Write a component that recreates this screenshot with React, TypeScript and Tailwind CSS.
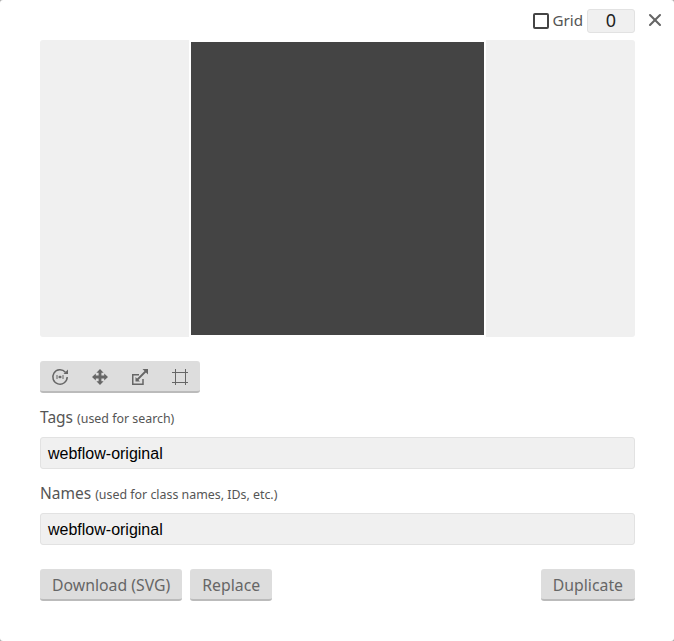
import { X } from 'lucide-react';

function ToolIcon({ children }: { children: React.ReactNode }) {
  return (
    <button className="w-10 h-full pt-[2px] flex items-center justify-center text-[#666]">
      <svg width="20" height="20" viewBox="0 0 20 20" fill="none" stroke="currentColor" strokeWidth="1.5">
        {children}
      </svg>
    </button>
  );
}

function Field({ label, hint, value }: { label: string; hint: string; value: string }) {
  return (
    <div>
      <div className="h-[22px] flex items-baseline gap-1 text-[#555]">
        <span className="text-[15.5px] leading-[22px]">{label}</span>
        <span className="text-[12.4px] leading-[22px]">{hint}</span>
      </div>
      <div className="mt-[9px] h-8 pt-px bg-[#f0f0f0] border border-[#e2e2e2] rounded-[3px] px-[7px] flex items-center text-base text-black font-['Liberation_Sans',sans-serif]">
        {value}
      </div>
    </div>
  );
}

function GrayButton({ children }: { children: React.ReactNode }) {
  return (
    <button className="h-8 px-3 pt-[3px] bg-[#dddddd] border-b-2 border-[#bbbbbb] rounded-[3px] text-[15.8px] text-[#666]">
      {children}
    </button>
  );
}

export default function App() {
  return (
    <div className="w-[674px] h-[641px] bg-[#aaaaaa] overflow-hidden">
      <div className="w-full h-full bg-white rounded-[3px] px-[40px] font-['Noto_Sans',sans-serif]">
        <div className="w-[595px] h-10 relative">
          <div className="flex items-center justify-end h-[41px]">
            <span className="w-4 h-4 border-2 border-[#444] rounded-[2px]" />
            <span className="ml-[3px] text-[15.2px] text-[#555]">Grid</span>
            <div className="ml-1 w-12 h-6 bg-[#f0f0f0] border border-[#e2e2e2] rounded-[3px] text-center text-[18px] leading-[20px] text-[#222]">0</div>
          </div>
          <X className="absolute left-[605px] top-[10px] w-5 h-5 text-[#666]" strokeWidth={2.5} />
        </div>
        <div className="w-[595px] h-[297px] bg-[#f0f0f0] rounded-[3px] flex items-center justify-center">
          <div className="w-[297px] h-[297px] border-2 border-white bg-[#444444]" />
        </div>
        <div className="mt-6 w-40 h-8 bg-[#dddddd] border-b-2 border-[#bbbbbb] rounded-[3px] flex">
          <ToolIcon>
            <path d="M15.4 5.2A7.2 7.2 0 1 0 17.2 10" />
            <path d="M18 2.5V7h-4.5z" fill="currentColor" stroke="none" />
            <path d="M7 8v4M13 8v4" strokeWidth="1" />
            <path d="M8 10l2-1.6v3.2zM12 10l-2-1.6v3.2z" fill="currentColor" stroke="none" />
          </ToolIcon>
          <ToolIcon>
            <path d="M10 2l3.6 3.8H6.4zM10 18l3.6-3.8H6.4zM2 10l3.8-3.6v7.2zM18 10l-3.8-3.6v7.2z" fill="currentColor" stroke="none" />
            <path d="M10 5v10M5 10h10" strokeWidth="2.8" />
          </ToolIcon>
          <ToolIcon>
            <path d="M9 7.75H2.75V17.25H13V12" />
            <path d="M7 13L16 4" strokeWidth="1.8" />
            <path d="M18 2v5.5L12.5 2zM5.5 14.5V10l4.5 4.5z" fill="currentColor" stroke="none" />
          </ToolIcon>
          <ToolIcon>
            <path d="M5.5 2v16M15.5 2v16M2 5.5h16M2 15.5h16" strokeWidth="1" />
          </ToolIcon>
        </div>
        <div className="mt-[13px] w-[595px] flex flex-col gap-[13px]">
          <Field label="Tags" hint="(used for search)" value="webflow-original" />
          <Field label="Names" hint="(used for class names, IDs, etc.)" value="webflow-original" />
        </div>
        <div className="mt-6 w-[595px] flex gap-2">
          <GrayButton>Download (SVG)</GrayButton>
          <GrayButton>Replace</GrayButton>
          <div className="ml-auto">
            <GrayButton>Duplicate</GrayButton>
          </div>
        </div>
      </div>
    </div>
  );
}
